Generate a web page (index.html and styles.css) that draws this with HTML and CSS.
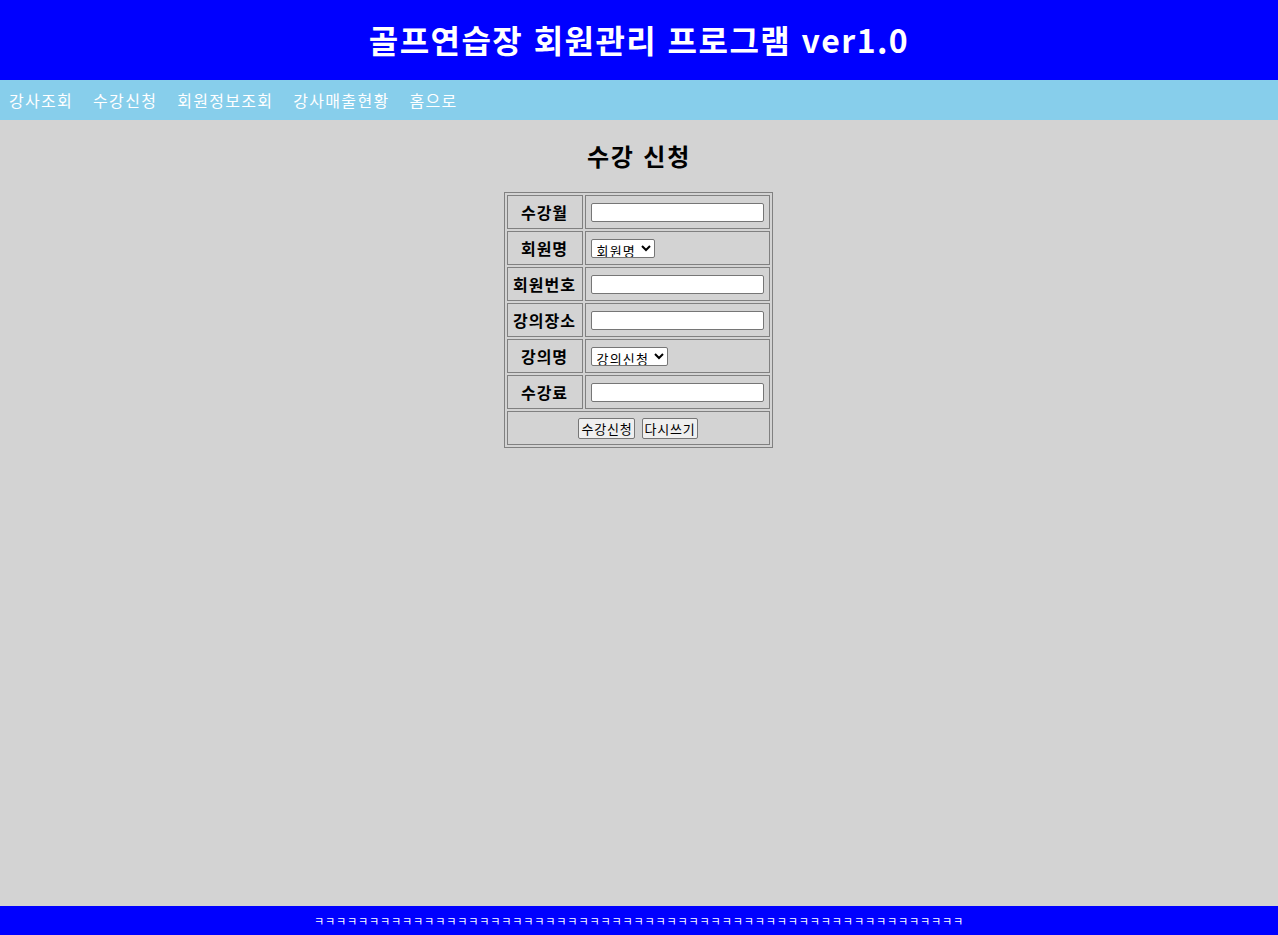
FILE: index.html
```html
<!DOCTYPE html>
<html lang="ko">
<head>
<meta charset="utf-8">
<title>골프연습장 회원관리 프로그램</title>
<link rel="stylesheet" href="styles.css">
</head>
<body>
<header class="header">
  <h1 class="title">골프연습장 회원관리 프로그램 ver1.0</h1>
</header>
<nav class="nav">
  <a href="#" class="nav-link">강사조회</a>
  <a href="#" class="nav-link">수강신청</a>
  <a href="#" class="nav-link">회원정보조회</a>
  <a href="#" class="nav-link">강사매출현황</a>
  <a href="#" class="nav-link">홈으로</a>
</nav>
<main class="main">
  <h2 class="section-title">수강 신청</h2>
  <form class="form">
    <table class="form-table">
      <tr>
        <th class="label">수강월</th>
        <td class="value"><input type="text" class="text-input"></td>
      </tr>
      <tr>
        <th class="label">회원명</th>
        <td class="value"><select class="select"><option>회원명</option></select></td>
      </tr>
      <tr>
        <th class="label">회원번호</th>
        <td class="value"><input type="text" class="text-input"></td>
      </tr>
      <tr>
        <th class="label">강의장소</th>
        <td class="value"><input type="text" class="text-input"></td>
      </tr>
      <tr>
        <th class="label">강의명</th>
        <td class="value"><select class="select"><option>강의신청</option></select></td>
      </tr>
      <tr>
        <th class="label">수강료</th>
        <td class="value"><input type="text" class="text-input"></td>
      </tr>
      <tr>
        <td class="actions" colspan="2">
          <div class="btn-row">
            <button type="button" class="btn">수강신청</button>
            <button type="reset" class="btn">다시쓰기</button>
          </div>
        </td>
      </tr>
    </table>
  </form>
</main>
<footer class="footer">ㅋㅋㅋㅋㅋㅋㅋㅋㅋㅋㅋㅋㅋㅋㅋㅋㅋㅋㅋㅋㅋㅋㅋㅋㅋㅋㅋㅋㅋㅋㅋㅋㅋㅋㅋㅋㅋㅋㅋㅋㅋㅋㅋㅋㅋㅋㅋㅋㅋㅋㅋㅋㅋㅋㅋㅋㅋㅋㅋ</footer>
</body>
</html>
```

FILE: styles.css
```css
* {
  box-sizing: border-box;
}

html, body {
  margin: 0;
  padding: 0;
}

body {
  min-height: 100vh;
  display: flex;
  flex-direction: column;
  background: #d3d3d3;
  font-family: "Noto Sans CJK KR", "Noto Sans", sans-serif;
  color: #000;
}

.header {
  height: 80px;
  background: #0000ff;
  display: flex;
  align-items: center;
  justify-content: center;
}

.title {
  margin: 0;
  color: #fff;
  font-size: 32px;
  font-weight: bold;
  line-height: 1;
  letter-spacing: 1.45px;
  padding-bottom: 2px;
}

.nav {
  height: 40px;
  background: #87ceeb;
  display: flex;
  align-items: center;
  padding-left: 9px;
  gap: 20px;
}

.nav-link {
  color: #fff;
  text-decoration: none;
  font-size: 16px;
  line-height: 1;
  letter-spacing: 1.3px;
}

.main {
  flex: 1;
  display: flex;
  flex-direction: column;
  align-items: center;
}

.section-title {
  margin: 22px 0 22px;
  font-size: 24px;
  font-weight: bold;
  line-height: 28px;
  letter-spacing: 1.8px;
}

.form {
  margin: 0;
}

.form-table {
  border-collapse: separate;
  border-spacing: 2px;
  border: 1px solid #808080;
  width: 269px;
  margin-left: -2px;
}

.form-table th,
.form-table td {
  border: 1px solid #808080;
  height: 34px;
  padding: 0 5px;
  font-size: 16px;
}

.label {
  width: 76px;
  text-align: center;
  font-weight: bold;
  padding: 0 !important;
  letter-spacing: 1px;
}

.value {
  text-align: left;
}

.text-input {
  width: 173px;
  height: 19px;
  border: 1px solid #767676;
  border-radius: 2px;
  background: #fff;
  padding: 0 2px;
  font-size: 13px;
  display: block;
}

.select {
  height: 19px;
  font-size: 13px;
  font-family: "Noto Sans CJK KR", sans-serif;
  letter-spacing: 1.2px;
  border: 1px solid #767676;
  border-radius: 2px;
  background: #fff;
  padding: 0 1px 0 1px;
  color: #000;
  display: block;
}

.actions {
  text-align: center;
}

.btn-row {
  display: flex;
  justify-content: center;
  gap: 7px;
}

.btn {
  height: 21px;
  padding: 0 1px 0 2px;
  font-size: 13px;
  font-family: "Noto Sans CJK KR", sans-serif;
  letter-spacing: 0.8px;
  border: 1px solid #767676;
  border-radius: 2px;
  background: #efefef;
  color: #000;
  margin: 0;
  line-height: 1;
}

.footer {
  height: 29px;
  background: #0000ff;
  color: #fff;
  font-size: 11px;
  letter-spacing: 0.9px;
  display: flex;
  align-items: center;
  justify-content: center;
}
```
